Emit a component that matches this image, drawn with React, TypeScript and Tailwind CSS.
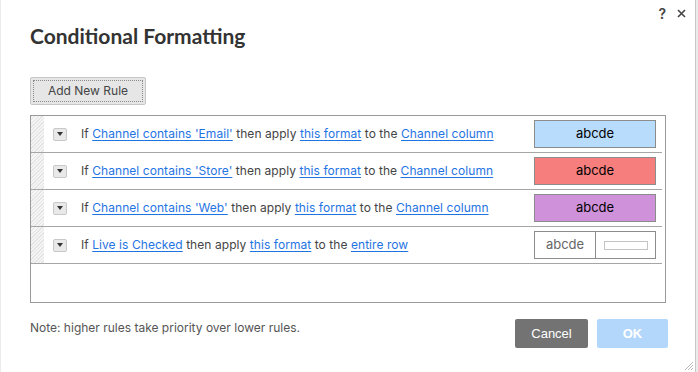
import React from 'react';

type Rule = {
  cond: string;
  target: string;
  swatch: 'blue' | 'red' | 'purple' | 'row';
};

const rules: Rule[] = [
  { cond: "Channel contains 'Email'", target: 'Channel column', swatch: 'blue' },
  { cond: "Channel contains 'Store'", target: 'Channel column', swatch: 'red' },
  { cond: "Channel contains 'Web'", target: 'Channel column', swatch: 'purple' },
  { cond: 'Live is Checked', target: 'entire row', swatch: 'row' },
];

const Link: React.FC<{ children: React.ReactNode }> = ({ children }) => (
  <span className="text-[#1f74e3] underline underline-offset-2 decoration-[#1f74e3]">{children}</span>
);

const Swatch: React.FC<{ kind: Rule['swatch'] }> = ({ kind }) => {
  if (kind === 'row') {
    return (
      <div className="flex h-[28px] w-[122px] border border-[#8c8c8c] bg-white text-[13px] text-[#666]">
        <div className="flex w-[61px] items-center justify-center border-r border-[#8c8c8c]">abcde</div>
        <div className="flex flex-1 items-center justify-center">
          <div className="h-[9px] w-[44px] border border-[#c4c4c4] bg-white" />
        </div>
      </div>
    );
  }
  const bg =
    kind === 'blue' ? 'bg-[#b8dcfc]' : kind === 'red' ? 'bg-[#f67f7e]' : 'bg-[#cf92da]';
  return (
    <div className={`flex h-[28px] w-[122px] items-center justify-center border border-[#8c8c8c] text-[13px] text-black ${bg}`}>
      abcde
    </div>
  );
};

const RuleRow: React.FC<{ rule: Rule }> = ({ rule }) => (
  <div className="flex h-[37px] items-center border-b border-[#a6a6a6]">
    <div className="h-full w-[13px] bg-[repeating-linear-gradient(135deg,#e4e4e4_0px,#e4e4e4_1px,#f5f5f5_1px,#f5f5f5_2.5px)]" />
    <div className="ml-[9px] flex h-[13px] w-[14px] items-center justify-center rounded-[2px] border border-[#c8c8c8] bg-[#e9e9e9]">
      <svg width="6" height="4" viewBox="0 0 6 4">
        <path d="M0 0 L6 0 L3 4 Z" fill="#333" />
      </svg>
    </div>
    <div className="ml-[14px] whitespace-nowrap text-[12px] tracking-[0.06px] text-[#444]">
      If <Link>{rule.cond}</Link> then apply <Link>this format</Link> to the <Link>{rule.target}</Link>
    </div>
    <div className="ml-auto mr-[6px]">
      <Swatch kind={rule.swatch} />
    </div>
  </div>
);

export default function App() {
  return (
    <div className="flex h-[372px] w-[698px] bg-[#ebebeb] font-['Inter',sans-serif]">
      <div className="relative ml-[1px] flex h-full w-[695px] flex-col border-r border-[#c8c8c8] bg-white pl-[29px] pr-[27px]">
        <div className="absolute right-[9px] top-[3px] flex items-center gap-[11px] text-[14px] text-[#444]">
          <span className="font-semibold">?</span>
          <svg width="9" height="9" viewBox="0 0 9 9">
            <path d="M1 1 L8 8 M8 1 L1 8" stroke="#444" strokeWidth="1.6" />
          </svg>
        </div>

        <h1 className="mt-[22px] font-['Lato',sans-serif] text-[21px] font-bold leading-[27px] text-[#333]">
          Conditional Formatting
        </h1>

        <div className="mt-[28px]">
          <button className="flex h-[28px] w-[116px] items-center justify-center rounded-[2px] border border-[#c6c6c6] bg-[#e6e6e6] p-[2px]">
            <span className="flex h-full w-full items-center justify-center border border-dotted border-[#8a8a8a] text-[12px] text-[#444]">
              Add New Rule
            </span>
          </button>
        </div>

        <div className="mt-[10px] h-[188px] w-[636px] border border-[#9a9a9a] pr-[3px]">
          {rules.map((r, i) => (
            <RuleRow key={i} rule={r} />
          ))}
        </div>

        <div className="mt-[16px] flex items-start">
          <div className="text-[12px] text-[#555]">Note: higher rules take priority over lower rules.</div>
          <div className="ml-auto flex gap-[9px]">
            <button className="h-[29px] w-[73px] rounded-[2px] bg-[#737373] font-['Liberation_Sans',sans-serif] text-[13px] text-white">
              Cancel
            </button>
            <button className="h-[29px] w-[71px] rounded-[2px] bg-[#b3d7fb] font-['Liberation_Sans',sans-serif] text-[13px] font-bold text-white">
              OK
            </button>
          </div>
        </div>

        <svg className="absolute bottom-[1px] right-[1px]" width="11" height="11" viewBox="0 0 11 11">
          <path d="M10 2 L2 10 M10 5 L5 10 M10 8 L8 10" stroke="#bbb" strokeWidth="1" />
        </svg>
      </div>
    </div>
  );
}
